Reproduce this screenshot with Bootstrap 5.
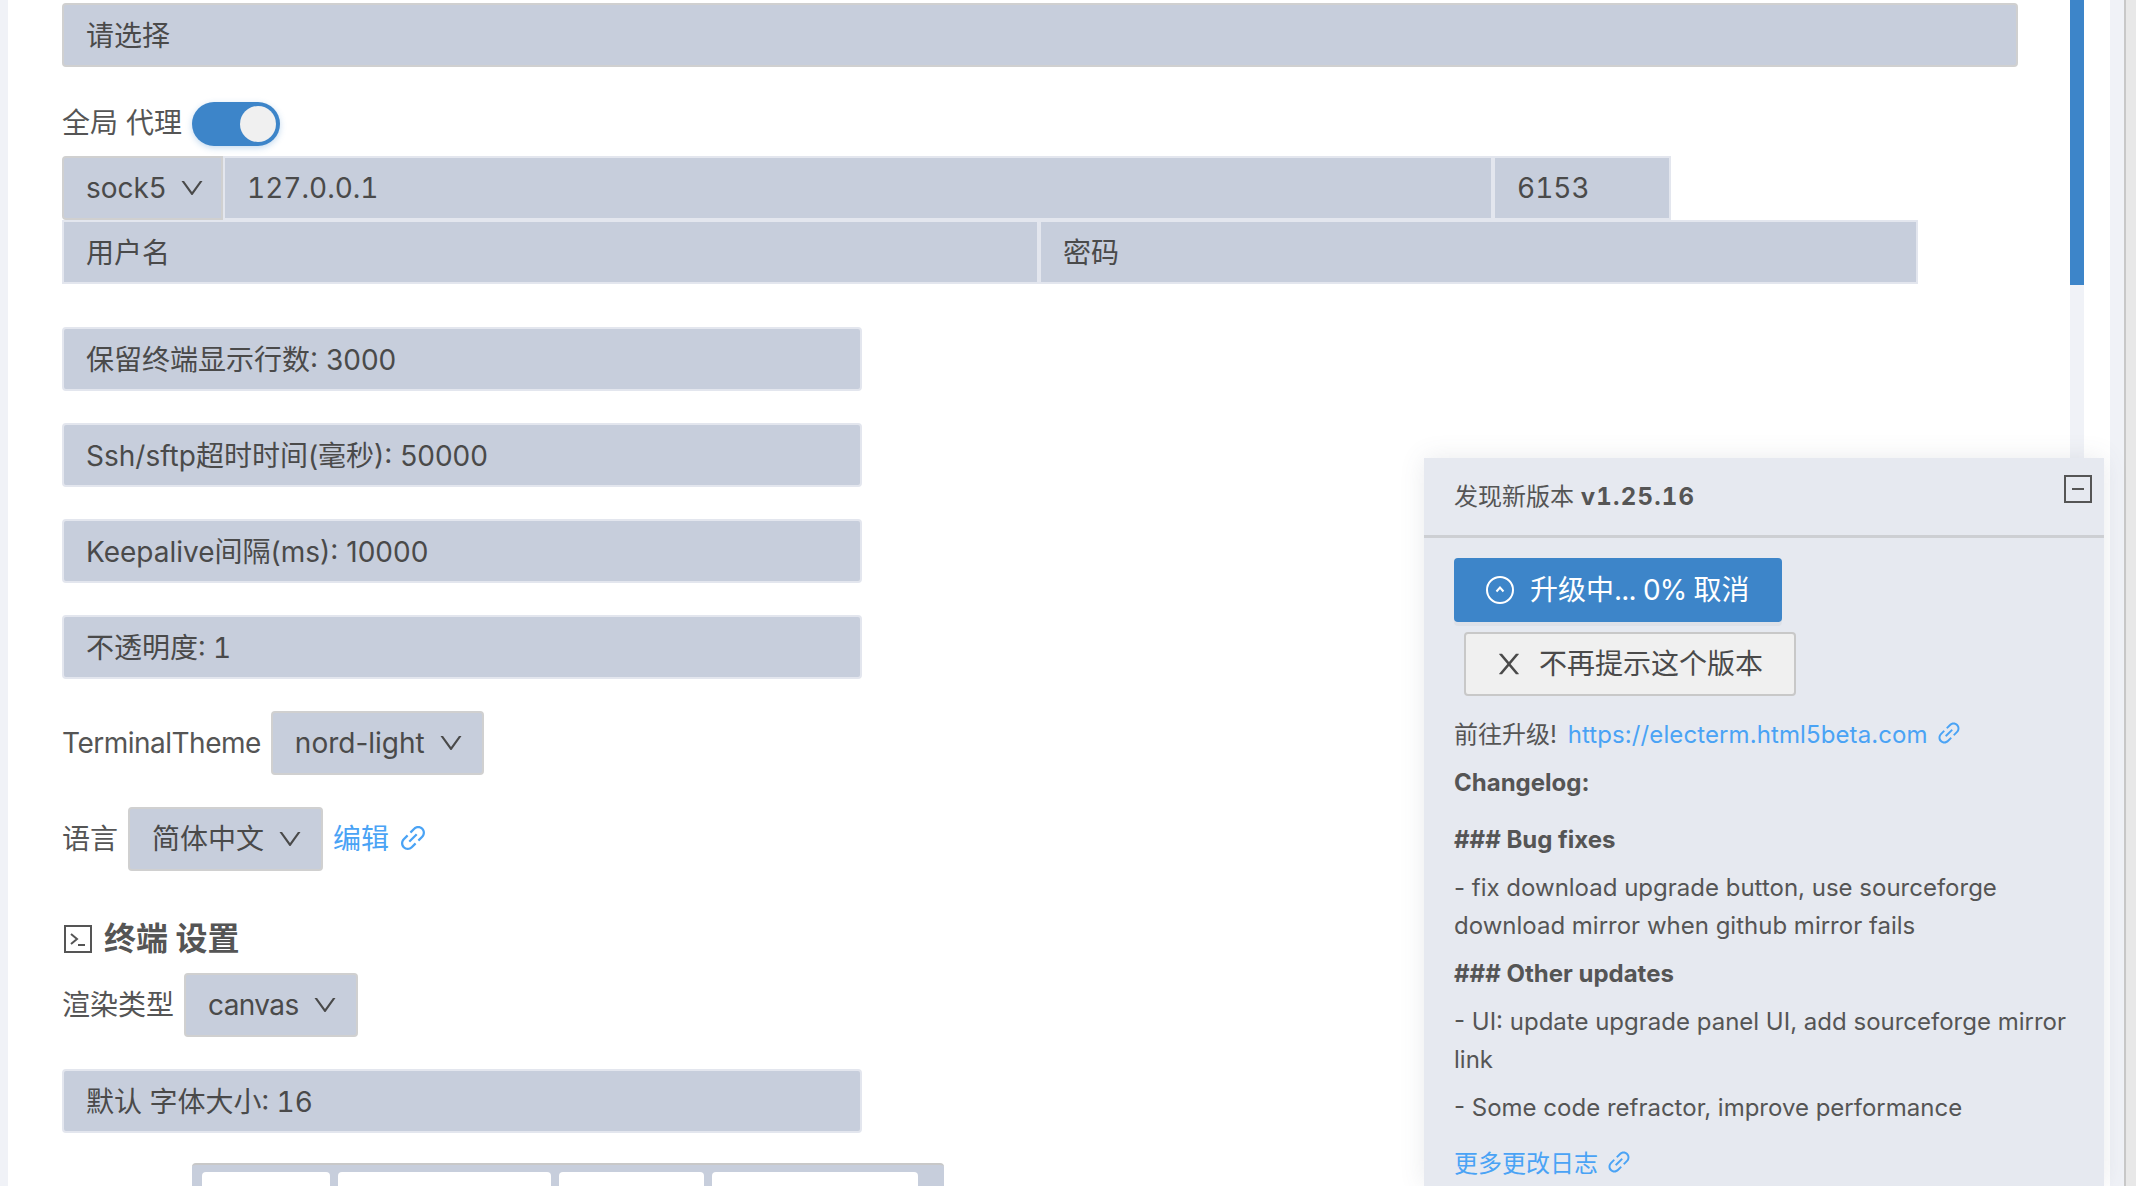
<!doctype html>
<html lang="zh">
<head>
<meta charset="utf-8">
<title>设置</title>
<link href="https://cdn.jsdelivr.net/npm/bootstrap@5.3.0/dist/css/bootstrap.min.css" rel="stylesheet">
<style>
html,body{height:1186px;overflow:hidden;background:#fff}
body{font-family:Inter,"Noto Sans CJK SC",sans-serif;font-size:28px;color:#555;line-height:40px}
.shell{height:1186px;overflow:hidden}
.edge-l{width:8px;background:#f0f2f7;flex:none}
.edge-r{width:14px;background:#f0f2f7;flex:none;margin-left:26px}
.edge-g{width:12px;background:#e8e8e8;border-left:2px solid #c8c8c8;flex:none}
.thumb-track{width:14px;background:#f0f2f7;flex:none}
.thumb-bar{height:285px;background:#3d85c9}
.pane{padding:3px 0 0 54px;width:2062px;flex:none;min-width:0}
.fld{height:64px;background:#c7cedc;border:2px solid #d0d0d0;border-radius:4px;color:#4a4a4a;font-size:28px;padding:0 22px 2px;line-height:58px;box-shadow:none}
.fld.soft{border-color:#e3e6ee}
.fld.nums{font-feature-settings:"tnum"}
.fld:focus{background:#c7cedc;box-shadow:none;border-color:#d0d0d0;color:#4a4a4a}
.w-main{width:1956px}
.w-num{width:800px}
.sw-row{height:44px;margin-top:35px;margin-bottom:10px;gap:10px}
.sw-row span{margin-top:-3px}
.tog{width:88px;height:44px;border-radius:22px;background:#3d85c9;position:relative;box-shadow:0 2px 6px rgba(61,133,201,.3)}
.tog::after{content:"";position:absolute;right:4px;top:4px;width:36px;height:36px;border-radius:50%;background:#f0f0f0}
.grp1{width:1609px;height:64px}
.grp1 .fld{padding-bottom:0}
.grp2{width:1856px;height:63px;margin-bottom:44px}
.grp1 .fld,.grp2 .fld{border-radius:0;border-color:#e3e6ee}
.sel{height:64px;background:#c7cedc;border:2px solid #d0d0d0;border-radius:4px;color:#4a4a4a;font-size:28px;padding:0 17px 0 22px;display:inline-flex;align-items:center;gap:12px;flex:none}
.sel svg{width:28px;height:28px;fill:#4a4a4a;flex:none}
.sel-a{width:161px;border-radius:4px 0 0 4px}
.ip-a{width:1270px;flex:none}
.ip-b{width:178px;flex:none}
.user-a{width:977px;flex:none}
.user-b{width:879px;flex:none}
.stack-32{margin-bottom:32px}
.lab-row{height:64px;gap:10px;margin-bottom:32px}
.snug{letter-spacing:-.5px}
.snug-2{letter-spacing:-.6px}
.lk{color:#4aa3f5;text-decoration:none}
.lk svg{fill:#4aa3f5}
.lk-big svg{width:32px;height:32px;vertical-align:-5px}
.lk-mid svg{width:28px;height:28px;vertical-align:-4px}
.lk-wide{letter-spacing:.1px;margin-left:4px}
.hd-row{font-size:32px;font-weight:700;color:#555;line-height:44px;gap:12px;margin-bottom:12px;margin-top:46px}
.hd-row svg{width:28px;height:28px;flex:none;margin-left:2px}
.tabs-box{width:752px;height:60px;margin:30px 0 0 130px;background:#c7cedc;border-top:2px solid #c8c8c8;border-radius:4px 4px 0 0;padding:7px 10px 0;gap:8px}
.tabs-box div{background:#fff;border-radius:4px 4px 0 0;height:60px}
.t1{width:128px}.t2{width:213px}.t3{width:145px}.t4{width:206px}
.upd{position:absolute;left:1424px;top:458px;width:680px;height:728px;background:#e6e9f0;box-shadow:0 0 24px rgba(80,90,110,.12);font-size:24px;line-height:38px;color:#555}
.upd-h{height:80px;border-bottom:3px solid #cdcfd3;padding:0 12px 0 30px}
.upd-h b{font-weight:700;letter-spacing:1.2px;font-feature-settings:"tnum"}
.upd-h svg{width:28px;height:28px;margin-top:-16px}
.upd-b{padding:20px 30px}
.act-p{width:328px;height:64px;background:#3d85c9;color:#fff;border:0;border-radius:4px;font-size:28px;gap:16px;padding:0 0 0 32px;box-shadow:0 4px 0 rgba(0,0,0,.03);justify-content:flex-start}
.act-p svg{width:28px;height:28px}
.act-p:hover{background:#3d85c9;color:#fff}
.tight{letter-spacing:-.8px}
.act-d{width:332px;height:64px;background:#f0f0f0;color:#4a4a4a;border:2px solid #c8c8c8;border-radius:4px;font-size:28px;gap:14px;padding:0 0 0 27px;margin:10px 0 0 10px;justify-content:flex-start}
.act-d svg{width:32px;height:32px;fill:#4a4a4a}
.act-d:hover{background:#f0f0f0;color:#4a4a4a}
.go-row{margin:20px 0 10px}
.clog{font-size:24px;line-height:38px;color:#555}
.clog p{margin:0 0 10px}
.clog .cap{font-weight:700;margin-bottom:19px}
.clog .ch{font-weight:700;margin-bottom:10px}
.more{margin-top:18px}
</style>
</head>
<body>
<div class="shell d-flex">
  <div class="edge-l"></div>
  <div class="pane">
    <input class="form-control fld w-main" value="请选择" readonly>
    <div class="d-flex align-items-center sw-row"><span>全局 代理</span><div class="tog"></div></div>
    <div class="d-flex grp1">
      <div class="sel sel-a">sock5<svg viewBox="0 0 1024 1024"><path d="M884 256h-75c-5.1 0-9.9 2.5-12.9 6.6L512 654.2 227.9 262.6c-3-4.1-7.8-6.6-12.9-6.6h-75c-6.5 0-10.3 7.4-6.5 12.7l352.6 486.1c12.8 17.6 39 17.6 51.7 0l352.6-486.1c3.9-5.3.1-12.7-6.4-12.7z"/></svg></div>
      <input class="form-control fld nums ip-a" value="127.0.0.1" readonly>
      <input class="form-control fld nums ip-b" value="6153" readonly>
    </div>
    <div class="d-flex grp2">
      <input class="form-control fld user-a" value="用户名" readonly>
      <input class="form-control fld user-b" value="密码" readonly>
    </div>
    <input class="form-control fld soft w-num stack-32" value="保留终端显示行数: 3000" readonly>
    <input class="form-control fld soft w-num stack-32" value="Ssh/sftp超时时间(毫秒): 50000" readonly>
    <input class="form-control fld soft w-num stack-32" value="Keepalive间隔(ms): 10000" readonly>
    <input class="form-control fld soft nums w-num stack-32" value="不透明度: 1" readonly>
    <div class="d-flex align-items-center lab-row"><span class="snug">TerminalTheme</span><div class="sel">nord-light<svg viewBox="0 0 1024 1024"><path d="M884 256h-75c-5.1 0-9.9 2.5-12.9 6.6L512 654.2 227.9 262.6c-3-4.1-7.8-6.6-12.9-6.6h-75c-6.5 0-10.3 7.4-6.5 12.7l352.6 486.1c12.8 17.6 39 17.6 51.7 0l352.6-486.1c3.9-5.3.1-12.7-6.4-12.7z"/></svg></div></div>
    <div class="d-flex align-items-center lab-row"><span>语言</span><div class="sel">简体中文<svg viewBox="0 0 1024 1024"><path d="M884 256h-75c-5.1 0-9.9 2.5-12.9 6.6L512 654.2 227.9 262.6c-3-4.1-7.8-6.6-12.9-6.6h-75c-6.5 0-10.3 7.4-6.5 12.7l352.6 486.1c12.8 17.6 39 17.6 51.7 0l352.6-486.1c3.9-5.3.1-12.7-6.4-12.7z"/></svg></div><a class="lk lk-big" href="#">编辑 <svg viewBox="0 0 1024 1024"><path d="M574 665.4a8.03 8.03 0 0 0-11.3 0L446.5 781.6c-53.8 53.8-144.6 59.5-204 0-59.5-59.5-53.8-150.2 0-204l116.2-116.2c3.1-3.1 3.1-8.2 0-11.3l-39.8-39.8a8.03 8.03 0 0 0-11.3 0L191.4 526.5c-84.6 84.6-84.6 221.5 0 306s221.5 84.6 306 0l116.2-116.2c3.1-3.1 3.1-8.2 0-11.3L574 665.4zm258.6-474c-84.6-84.6-221.5-84.6-306 0L410.3 307.6a8.03 8.03 0 0 0 0 11.3l39.7 39.7c3.1 3.1 8.2 3.1 11.3 0l116.2-116.2c53.8-53.8 144.6-59.5 204 0 59.5 59.5 53.8 150.2 0 204L665.3 562.6a8.03 8.03 0 0 0 0 11.3l39.8 39.8c3.1 3.1 8.2 3.1 11.3 0l116.2-116.2c84.5-84.6 84.5-221.5 0-306.1zM610.1 372.3a8.03 8.03 0 0 0-11.3 0L372.3 598.7a8.03 8.03 0 0 0 0 11.3l39.6 39.6c3.1 3.1 8.2 3.1 11.3 0l226.4-226.4c3.1-3.1 3.1-8.2 0-11.3l-39.5-39.6z"/></svg></a></div>
    <div class="d-flex align-items-center hd-row"><svg viewBox="0 0 28 28" fill="none" stroke="#555" stroke-width="2"><rect x="1" y="1" width="26" height="26"/><path d="M7 9l6 5-6 5M14 20h7"/></svg><span>终端 设置</span></div>
    <div class="d-flex align-items-center lab-row"><span>渲染类型</span><div class="sel"><span class="snug-2">canvas</span><svg viewBox="0 0 1024 1024"><path d="M884 256h-75c-5.1 0-9.9 2.5-12.9 6.6L512 654.2 227.9 262.6c-3-4.1-7.8-6.6-12.9-6.6h-75c-6.5 0-10.3 7.4-6.5 12.7l352.6 486.1c12.8 17.6 39 17.6 51.7 0l352.6-486.1c3.9-5.3.1-12.7-6.4-12.7z"/></svg></div></div>
    <input class="form-control fld soft nums w-num" value="默认 字体大小: 16" readonly>
    <div class="d-flex tabs-box"><div class="t1"></div><div class="t2"></div><div class="t3"></div><div class="t4"></div></div>
  </div>
  <div class="thumb-track"><div class="thumb-bar"></div></div>
  <div class="edge-r"></div>
  <div class="edge-g"></div>
</div>
<div class="upd">
  <div class="upd-h d-flex align-items-center justify-content-between"><span>发现新版本 <b>v1.25.16</b></span><svg viewBox="0 0 28 28" fill="none" stroke="#555" stroke-width="2"><rect x="1" y="1" width="26" height="26"/><path d="M8 14h12"/></svg></div>
  <div class="upd-b">
    <div><button class="btn d-flex align-items-center act-p"><svg viewBox="0 0 28 28" fill="none" stroke="#fff" stroke-width="2"><circle cx="14" cy="14" r="13"/><path d="M10.5 15.5l3.5-4 3.5 4"/></svg><span>升级中<span class="tight">... 0% </span>取消</span></button></div>
    <div><button class="btn d-flex align-items-center act-d"><svg viewBox="0 0 1024 1024"><path d="M563.8 512l262.5-312.9c4.4-5.2.7-13.1-6.1-13.1h-79.8c-4.7 0-9.2 2.1-12.3 5.7L511.6 449.8 295.1 191.7c-3-3.6-7.5-5.7-12.3-5.7H203c-6.8 0-10.5 7.9-6.1 13.1L459.4 512 196.9 824.9A7.95 7.95 0 0 0 203 838h79.8c4.7 0 9.2-2.1 12.3-5.7l216.5-258.1 216.5 258.1c3 3.6 7.5 5.7 12.3 5.7h79.8c6.8 0 10.5-7.9 6.1-13.1L563.8 512z"/></svg>不再提示这个版本</button></div>
    <div class="go-row">前往升级! <a class="lk lk-mid lk-wide" href="#">https://electerm.html5beta.com <svg viewBox="0 0 1024 1024"><path d="M574 665.4a8.03 8.03 0 0 0-11.3 0L446.5 781.6c-53.8 53.8-144.6 59.5-204 0-59.5-59.5-53.8-150.2 0-204l116.2-116.2c3.1-3.1 3.1-8.2 0-11.3l-39.8-39.8a8.03 8.03 0 0 0-11.3 0L191.4 526.5c-84.6 84.6-84.6 221.5 0 306s221.5 84.6 306 0l116.2-116.2c3.1-3.1 3.1-8.2 0-11.3L574 665.4zm258.6-474c-84.6-84.6-221.5-84.6-306 0L410.3 307.6a8.03 8.03 0 0 0 0 11.3l39.7 39.7c3.1 3.1 8.2 3.1 11.3 0l116.2-116.2c53.8-53.8 144.6-59.5 204 0 59.5 59.5 53.8 150.2 0 204L665.3 562.6a8.03 8.03 0 0 0 0 11.3l39.8 39.8c3.1 3.1 8.2 3.1 11.3 0l116.2-116.2c84.5-84.6 84.5-221.5 0-306.1zM610.1 372.3a8.03 8.03 0 0 0-11.3 0L372.3 598.7a8.03 8.03 0 0 0 0 11.3l39.6 39.6c3.1 3.1 8.2 3.1 11.3 0l226.4-226.4c3.1-3.1 3.1-8.2 0-11.3l-39.5-39.6z"/></svg></a></div>
    <div class="clog">
      <p class="cap">Changelog:</p>
      <p class="ch">### Bug fixes</p>
      <p>- fix download upgrade button, use sourceforge download mirror when github mirror fails</p>
      <p class="ch">### Other updates</p>
      <p>- UI: update upgrade panel UI, add sourceforge mirror link</p>
      <p>- Some code refractor, improve performance</p>
    </div>
    <div class="more"><a class="lk lk-mid" href="#">更多更改日志 <svg viewBox="0 0 1024 1024"><path d="M574 665.4a8.03 8.03 0 0 0-11.3 0L446.5 781.6c-53.8 53.8-144.6 59.5-204 0-59.5-59.5-53.8-150.2 0-204l116.2-116.2c3.1-3.1 3.1-8.2 0-11.3l-39.8-39.8a8.03 8.03 0 0 0-11.3 0L191.4 526.5c-84.6 84.6-84.6 221.5 0 306s221.5 84.6 306 0l116.2-116.2c3.1-3.1 3.1-8.2 0-11.3L574 665.4zm258.6-474c-84.6-84.6-221.5-84.6-306 0L410.3 307.6a8.03 8.03 0 0 0 0 11.3l39.7 39.7c3.1 3.1 8.2 3.1 11.3 0l116.2-116.2c53.8-53.8 144.6-59.5 204 0 59.5 59.5 53.8 150.2 0 204L665.3 562.6a8.03 8.03 0 0 0 0 11.3l39.8 39.8c3.1 3.1 8.2 3.1 11.3 0l116.2-116.2c84.5-84.6 84.5-221.5 0-306.1zM610.1 372.3a8.03 8.03 0 0 0-11.3 0L372.3 598.7a8.03 8.03 0 0 0 0 11.3l39.6 39.6c3.1 3.1 8.2 3.1 11.3 0l226.4-226.4c3.1-3.1 3.1-8.2 0-11.3l-39.5-39.6z"/></svg></a></div>
  </div>
</div>
<script src="https://cdn.jsdelivr.net/npm/bootstrap@5.3.0/dist/js/bootstrap.bundle.min.js"></script>
</body>
</html>
